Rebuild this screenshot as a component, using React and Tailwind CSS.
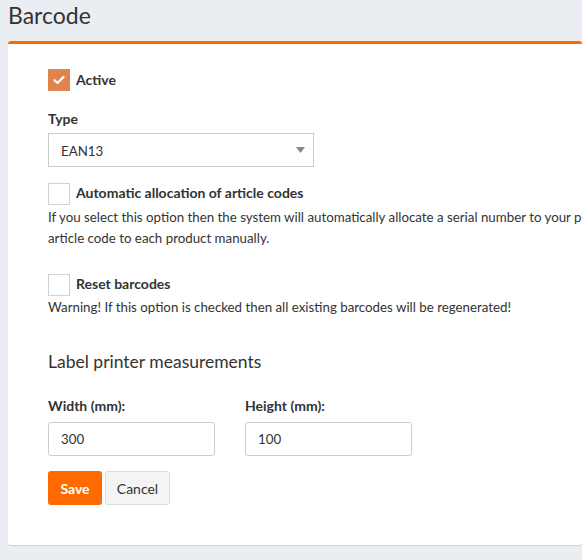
import React from 'react';

const font = { fontFamily: 'Lato, "Noto Sans", sans-serif' };

function Checkbox({ checked }) {
  if (checked) {
    return (
      <span className="flex h-[22px] w-[22px] shrink-0 items-center justify-center bg-[#e0834f]">
        <svg width="12" height="10" viewBox="0 0 12 10" fill="none">
          <path d="M1.5 5.2 L4.5 8 L10.5 2" stroke="#fff" strokeWidth="2.2" strokeLinecap="round" strokeLinejoin="round" />
        </svg>
      </span>
    );
  }
  return <span className="block h-[22px] w-[22px] shrink-0 border border-[#d2d2d2] bg-white" />;
}

function Field({ label, value }) {
  return (
    <div className="flex w-[167px] flex-col">
      <label className="mb-[7px] text-[14px] font-bold leading-[18px] text-[#333]">{label}</label>
      <div className="flex h-[34px] items-center rounded-[3px] border border-[#ccc] px-[12px] pt-[1px] text-[13.3px] text-[#333]">
        {value}
      </div>
    </div>
  );
}

export default function App() {
  return (
    <div className="min-h-[560px] overflow-hidden bg-[#eaedf2] pl-[8px]" style={font}>
      <h1 className="pt-[1px] text-[23px] leading-[28px] text-[#333]">Barcode</h1>
      <div className="mt-[12px] h-[504px] overflow-hidden rounded-[3px] border-t-[3px] border-[#ff6a00] bg-white pl-[40px] pt-[25px] shadow-[0_1px_1px_rgba(0,0,0,0.12)]">
        <div className="flex items-center gap-[6px]">
          <Checkbox checked />
          <span className="-mt-[2px] text-[14px] font-bold text-[#333]">Active</span>
        </div>

        <div className="mt-[19px] text-[14px] font-bold leading-[18px] text-[#333]">Type</div>
        <div className="mt-[5px] flex h-[34px] w-[266px] items-center justify-between border border-[#ccc] pl-[12px] pr-[8px] text-[13.3px] text-[#333]">
          <span className="pt-[3px]">EAN13</span>
          <svg width="9" height="6" viewBox="0 0 9 6">
            <path d="M0 0 H9 L4.5 6 Z" fill="#888" />
          </svg>
        </div>

        <div className="mt-[16px] flex items-center gap-[6px]">
          <Checkbox />
          <span className="-mt-[4px] text-[14px] font-bold text-[#333]">Automatic allocation of article codes</span>
        </div>
        <p className="mt-[2px] whitespace-nowrap text-[13.3px] leading-[21px] text-[#333]">
          If you select this option then the system will automatically allocate a serial number to your products instead of you having to enter an
          <br />
          article code to each product manually.
        </p>

        <div className="mt-[25px] flex items-center gap-[6px]">
          <Checkbox />
          <span className="-mt-[4px] text-[14px] font-bold text-[#333]">Reset barcodes</span>
        </div>
        <p className="mt-[1px] text-[13.3px] leading-[21px] text-[#333]">
          Warning! If this option is checked then all existing barcodes will be regenerated!
        </p>

        <h2 className="mt-[32px] text-[17.5px] leading-[24px] text-[#333]">Label printer measurements</h2>

        <div className="mt-[23px] flex gap-[30px]">
          <Field label="Width (mm):" value="300" />
          <Field label="Height (mm):" value="100" />
        </div>

        <div className="mt-[15px] flex gap-[3px]">
          <button className="h-[34px] w-[54px] rounded-[3px] bg-[#ff6a00] text-[14px] font-bold text-white">Save</button>
          <button className="h-[34px] w-[65px] rounded-[3px] border border-[#ddd] bg-[#f4f4f4] text-[14px] text-[#333]">Cancel</button>
        </div>
      </div>
    </div>
  );
}
